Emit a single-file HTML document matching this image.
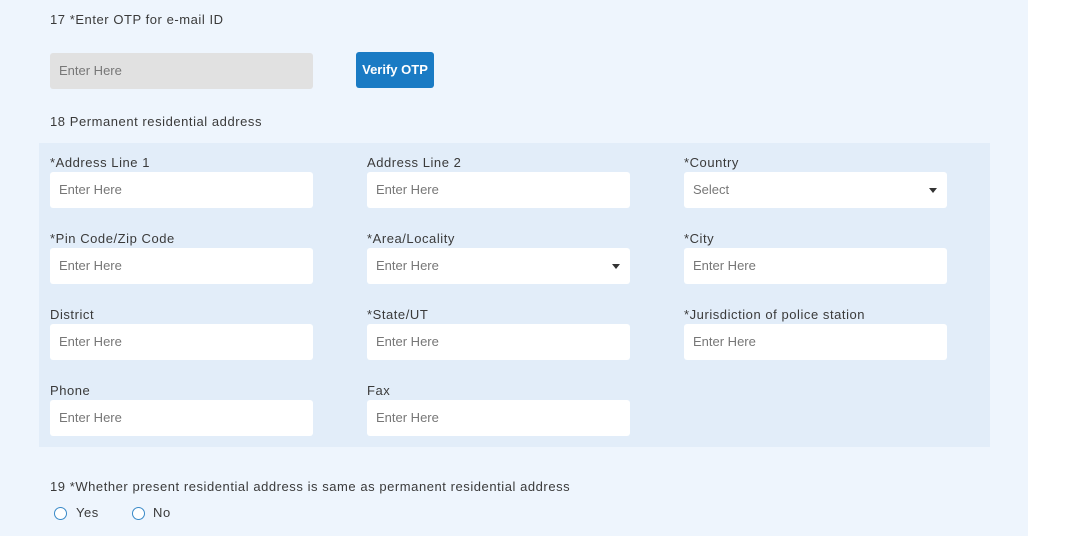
<!DOCTYPE html>
<html><head><style>
*{box-sizing:border-box;margin:0;padding:0}
body{width:1068px;height:536px;background:#fff;font-family:"Liberation Sans",sans-serif;position:relative;overflow:hidden;color:#333}
.bg{position:absolute;left:0;top:0;width:1028px;height:536px;background:#eef5fd}
.panel{position:absolute;left:39px;top:143px;width:951px;height:304px;background:#e2edf9}
.t{position:absolute;font-size:13px;color:#3a3a3a;white-space:nowrap;letter-spacing:0.55px}
.in{position:absolute;width:263px;height:36px;background:#fff;border-radius:3px;font-size:13px;color:#777;padding:10px 0 0 9px}
.dd::after{content:"";position:absolute;right:10px;top:16px;border-left:4px solid transparent;border-right:4px solid transparent;border-top:5px solid #333}
.r{position:absolute;width:13px;height:13px;border:1px solid #3a8ac8;border-radius:50%;background:#fff}
</style></head><body>
<div class="bg"></div>
<div class="t" style="left:50px;top:12px">17 *Enter OTP for e-mail ID</div>
<div class="in" style="left:50px;top:53px;background:#e1e1e1;color:#777">Enter Here</div>
<div style="position:absolute;left:356px;top:52px;width:78px;height:36px;background:#1a7bc4;border-radius:3px;color:#fff;font-weight:bold;font-size:13px;text-align:center;line-height:36px">Verify OTP</div>
<div class="t" style="left:50px;top:114px">18 Permanent residential address</div>
<div class="panel"></div>
<div class="t" style="left:50px;top:155px">*Address Line 1</div>
<div class="t" style="left:367px;top:155px">Address Line 2</div>
<div class="t" style="left:684px;top:155px">*Country</div>
<div class="in" style="left:50px;top:172px">Enter Here</div>
<div class="in" style="left:367px;top:172px">Enter Here</div>
<div class="in dd" style="left:684px;top:172px">Select</div>
<div class="t" style="left:50px;top:231px">*Pin Code/Zip Code</div>
<div class="t" style="left:367px;top:231px">*Area/Locality</div>
<div class="t" style="left:684px;top:231px">*City</div>
<div class="in" style="left:50px;top:248px">Enter Here</div>
<div class="in dd" style="left:367px;top:248px">Enter Here</div>
<div class="in" style="left:684px;top:248px">Enter Here</div>
<div class="t" style="left:50px;top:307px">District</div>
<div class="t" style="left:367px;top:307px">*State/UT</div>
<div class="t" style="left:684px;top:307px">*Jurisdiction of police station</div>
<div class="in" style="left:50px;top:324px">Enter Here</div>
<div class="in" style="left:367px;top:324px">Enter Here</div>
<div class="in" style="left:684px;top:324px">Enter Here</div>
<div class="t" style="left:50px;top:383px">Phone</div>
<div class="t" style="left:367px;top:383px">Fax</div>
<div class="in" style="left:50px;top:400px">Enter Here</div>
<div class="in" style="left:367px;top:400px">Enter Here</div>
<div class="t" style="left:50px;top:479px">19 *Whether present residential address is same as permanent residential address</div>
<div class="r" style="left:54px;top:507px"></div>
<div class="t" style="left:76px;top:505px">Yes</div>
<div class="r" style="left:132px;top:507px"></div>
<div class="t" style="left:153px;top:505px">No</div>
</body></html>
